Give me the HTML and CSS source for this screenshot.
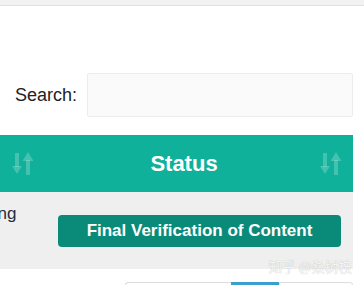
FILE: index.html
```html
<!DOCTYPE html>
<html lang="en">
    <head>
        <meta charset="UTF-8" />
        <meta name="viewport" content="width=device-width, initial-scale=1.0" />
        <title>Tasks</title>
        <link rel="stylesheet" href="styles.css">
    </head>
    <body>
        <div class="topbar"></div>

        <div class="page">
            <div class="toolbar">
                <label for="search">Search:</label>
                <input type="search" id="search" />
            </div>

            <div class="table-wrap">
                <table class="grid">
                    <thead>
                        <tr>
                            <th class="col-name sorting" aria-label="Task"></th>
                            <th class="col-status sorting">Status</th>
                        </tr>
                    </thead>
                    <tbody>
                        <tr>
                            <td class="col-name">Pending</td>
                            <td class="col-status">
                                <button type="button" class="status-btn">Final Verification of Content</button>
                            </td>
                        </tr>
                    </tbody>
                </table>
            </div>

            <!-- pagination, only its top edge is in view -->
            <div class="pager">
                <a class="page-link prev" aria-label="Previous"></a>
                <a class="page-link active" aria-label="Page 1"></a>
                <a class="page-link next" aria-label="Next"></a>
            </div>
        </div>

        <div class="watermark">知乎 @桑树枝</div>
    </body>
</html>
```

FILE: styles.css
```css
body {
    font-family: "Liberation Sans", Arial, sans-serif;
    background-color: white;
    margin: 0;
    padding: 0;
    overflow: hidden;
}
.topbar {
    height: 5px;
    background-color: #f2f2f2;
    border-bottom: 1px solid #e0e0e0;
}
.page {
    width: 353px;
}
.toolbar {
    display: flex;
    justify-content: flex-end;
    align-items: center;
    gap: 10px;
    margin-top: 67px;
}
.toolbar label {
    font-size: 18px;
    color: #222;
}
.toolbar input {
    width: 266px;
    height: 44px;
    box-sizing: border-box;
    background-color: #fafafa;
    border: 1px solid #ececec;
    border-radius: 2px;
    outline: none;
}
.table-wrap {
    margin-top: 18px;
    overflow: hidden;
}
.grid {
    border-collapse: collapse;
    margin-left: -75px;
    width: 428px;
}
.grid thead tr {
    height: 57px;
}
.grid th {
    position: relative;
    padding: 0 40px 0 10px;
    background-color: #10b19a;
    color: white;
    font-size: 22px;
    font-weight: bold;
    text-align: center;
}
.grid th.col-name {
    width: 70px;
}
.grid th.sorting::after {
    content: "";
    position: absolute;
    right: 12px;
    top: 17px;
    width: 21px;
    height: 23px;
    background: url("data:image/svg+xml,%3Csvg xmlns='http://www.w3.org/2000/svg' viewBox='0 0 21 23'%3E%3Cg fill='%23ffffff' fill-opacity='0.22'%3E%3Crect x='3' y='1' width='4' height='14'/%3E%3Cpath d='M0 14h10l-5 8z'/%3E%3Crect x='14' y='8' width='4' height='15'/%3E%3Cpath d='M10.5 9h11l-5.5-9z'/%3E%3C/g%3E%3C/svg%3E") no-repeat;
}
.grid tbody tr {
    height: 77px;
}
.grid td {
    padding: 0;
    background-color: #efefef;
}
.grid td.col-name {
    vertical-align: top;
    padding: 10px 0 0 29px;
    font-size: 17px;
    line-height: 24px;
    color: #1f2d3d;
}
.grid td.col-status {
    padding: 0 12px 0 13px;
    vertical-align: middle;
}
.status-btn {
    display: block;
    width: 100%;
    height: 32px;
    padding: 0;
    border: none;
    border-radius: 4px;
    background-color: #0a8a78;
    color: white;
    font-family: "Liberation Sans", Arial, sans-serif;
    font-size: 17px;
    font-weight: bold;
}
.pager {
    display: flex;
    justify-content: flex-end;
    margin-top: 13px;
}
.page-link {
    display: block;
    height: 34px;
    box-sizing: border-box;
    border: 1px solid #dddddd;
    border-right: none;
}
.page-link.prev {
    width: 106px;
    border-radius: 3px 0 0 3px;
}
.page-link.active {
    width: 48px;
    background-color: #3a9ecf;
    border-color: #3a9ecf;
}
.page-link.next {
    width: 74px;
    border-right: 1px solid #dddddd;
    border-radius: 0 3px 3px 0;
}
.watermark {
    position: absolute;
    top: 256px;
    right: 12px;
    font-family: "Noto Sans CJK SC", sans-serif;
    font-size: 13.5px;
    color: rgba(255, 255, 255, 0.9);
    text-shadow: 0 0 1px rgba(0, 0, 0, 0.3);
}
```
